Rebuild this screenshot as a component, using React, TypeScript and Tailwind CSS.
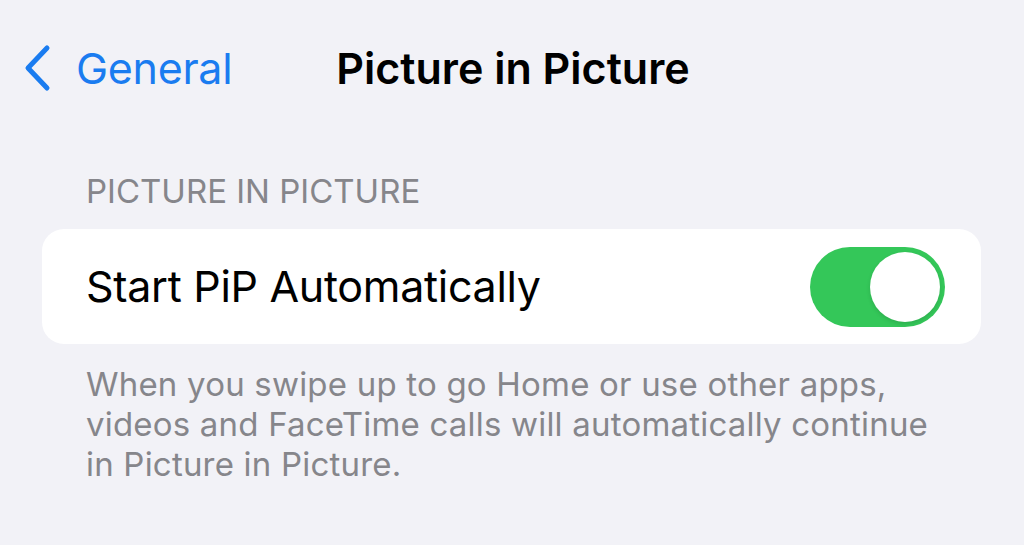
import React from "react";

const font = { fontFamily: "Inter, 'Liberation Sans', sans-serif" };

export default function App() {
  return (
    <div
      className="w-[1024px] h-[545px] bg-[#f2f2f7] overflow-hidden antialiased"
      style={font}
    >
      {/* Nav bar */}
      <div className="h-[140px] flex items-start pt-[44px]">
        <div className="flex items-center pl-[22px] text-[#1a7cf0]">
          <svg width="30" height="48" viewBox="0 0 30 48" fill="none">
            <path
              d="M25 4 L6 24 L25 44"
              stroke="#1a7cf0"
              strokeWidth="5"
              strokeLinecap="round"
              strokeLinejoin="round"
            />
          </svg>
          <span className="ml-[24px] text-[43px] leading-[48px] tracking-[-0.3px]">
            General
          </span>
        </div>
        <div className="ml-[104px] text-[43px] leading-[48px] font-semibold text-black">
          Picture in Picture
        </div>
      </div>

      {/* Section */}
      <div className="pl-[42px] pr-[43px]">
        <div className="pl-[44px] mt-[31px] text-[33px] leading-[40px] text-[#86868b] uppercase">
          Picture in Picture
        </div>
        <div className="mt-[18px] h-[115px] bg-white rounded-[22px] flex items-center justify-between pl-[44px] pr-[36px]">
          <span className="text-[43px] text-black tracking-[-0.3px]">
            Start PiP Automatically
          </span>
          <div className="w-[135px] h-[80px] rounded-full bg-[#34c759] flex items-center justify-end pr-[5px]">
            <div className="w-[70px] h-[70px] rounded-full bg-white shadow-[0_2px_4px_rgba(0,0,0,0.12)]" />
          </div>
        </div>
        <p className="pl-[44px] pr-[41px] pt-[20px] text-[33px] leading-[40px] text-[#86868b] tracking-[0.2px]">
          When you swipe up to go Home or use other apps, videos and FaceTime
          calls will automatically continue in Picture in Picture.
        </p>
      </div>
    </div>
  );
}
